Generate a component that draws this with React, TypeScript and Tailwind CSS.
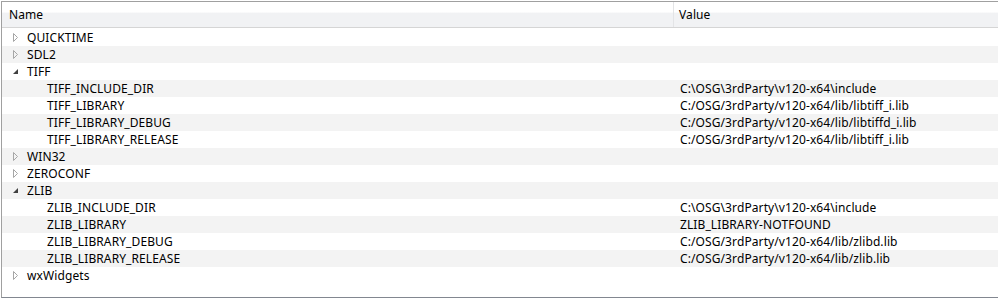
type Row = { name: string; value?: string; level: 0 | 1; open?: boolean };

const rows: Row[] = [
  { name: 'QUICKTIME', level: 0, open: false },
  { name: 'SDL2', level: 0, open: false },
  { name: 'TIFF', level: 0, open: true },
  { name: 'TIFF_INCLUDE_DIR', value: 'C:\\OSG\\3rdParty\\v120-x64\\include', level: 1 },
  { name: 'TIFF_LIBRARY', value: 'C:/OSG/3rdParty/v120-x64/lib/libtiff_i.lib', level: 1 },
  { name: 'TIFF_LIBRARY_DEBUG', value: 'C:/OSG/3rdParty/v120-x64/lib/libtiffd_i.lib', level: 1 },
  { name: 'TIFF_LIBRARY_RELEASE', value: 'C:/OSG/3rdParty/v120-x64/lib/libtiff_i.lib', level: 1 },
  { name: 'WIN32', level: 0, open: false },
  { name: 'ZEROCONF', level: 0, open: false },
  { name: 'ZLIB', level: 0, open: true },
  { name: 'ZLIB_INCLUDE_DIR', value: 'C:\\OSG\\3rdParty\\v120-x64\\include', level: 1 },
  { name: 'ZLIB_LIBRARY', value: 'ZLIB_LIBRARY-NOTFOUND', level: 1 },
  { name: 'ZLIB_LIBRARY_DEBUG', value: 'C:/OSG/3rdParty/v120-x64/lib/zlibd.lib', level: 1 },
  { name: 'ZLIB_LIBRARY_RELEASE', value: 'C:/OSG/3rdParty/v120-x64/lib/zlib.lib', level: 1 },
  { name: 'wxWidgets', level: 0, open: false },
];

// Explorer-style tree arrows
function Arrow({ open }: { open?: boolean }) {
  if (open) {
    return (
      <svg width="7" height="7" viewBox="0 0 7 7" className="block">
        <path d="M6 1 L6 6 L1 6 Z" fill="#404040" />
      </svg>
    );
  }
  return (
    <svg width="7" height="9" viewBox="0 0 7 9" className="block">
      <path d="M1.5 0.5 L5.5 4.5 L1.5 8.5 Z" fill="none" stroke="#a6a6a6" strokeWidth="1" />
    </svg>
  );
}

export default function App() {
  return (
    <div
      className="w-[998px] h-[299px] bg-white pt-px pl-px"
      style={{ fontFamily: '"Noto Sans", "Open Sans", Arial, sans-serif' }}
    >
      <div className="h-[297px] border-t border-l border-b border-t-[#a0a0a0] border-l-[#a0a0a0] border-b-[#828790] overflow-hidden text-[12px] tracking-[0.1px] text-black">
        {/* header */}
        <div className="flex h-[26px] border-b border-[#d5d5d5] bg-[linear-gradient(to_bottom,#ffffff_0%,#ffffff_40%,#f1f2f4_45%,#f1f2f4_100%)]">
          <div className="w-[672px] border-r border-[#e3e4e6] pl-[7px] flex items-center leading-none">Name</div>
          <div className="flex-1 pl-[5px] flex items-center leading-none">Value</div>
        </div>
        {/* rows */}
        <div className="pt-px">
          {rows.map((r, i) => (
            <div
              key={r.name}
              className={`flex h-[17px] items-center leading-none ${i % 2 === 1 ? 'bg-[#f3f3f3]' : 'bg-white'}`}
            >
              <div className="w-[673px] flex items-center">
                {r.level === 0 ? (
                  <>
                    <span className="w-[25px] pl-[10px] flex items-center">
                      <Arrow open={r.open} />
                    </span>
                    <span>{r.name}</span>
                  </>
                ) : (
                  <span className="pl-[45px]">{r.name}</span>
                )}
              </div>
              <div className="flex-1 pl-[5px]">{r.value ?? ''}</div>
            </div>
          ))}
        </div>
      </div>
    </div>
  );
}
